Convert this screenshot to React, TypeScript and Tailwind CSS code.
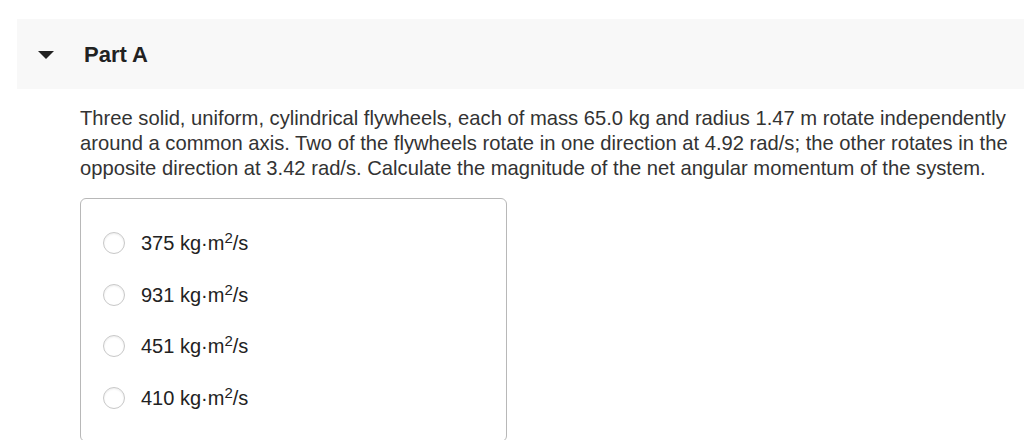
const options = ['375', '931', '451', '410'];

function Radio() {
  return (
    <span className="w-[22px] h-[22px] rounded-full border border-[#c8c8c8] bg-white shadow-[inset_0_1px_2px_rgba(0,0,0,0.08)] shrink-0" />
  );
}

export default function App() {
  return (
    <div className="w-[1024px] h-[440px] overflow-hidden bg-white text-[#333] font-['Liberation_Sans',Arial,sans-serif] pt-[19px]">
      {/* Part header */}
      <div className="ml-[17px] h-[70px] bg-[#f8f8f8] flex items-center">
        <svg className="ml-[21px] mt-[2px]" width="16" height="9" viewBox="0 0 16 9">
          <polygon points="0,0 16,0 8,8" fill="#222" />
        </svg>
        <h2 className="ml-[30px] text-[22px] font-bold text-[#222]">Part A</h2>
      </div>

      <div className="pl-[80px] pr-[8px]">
        <p className="mt-[17px] text-[20.2px] leading-[25px]">
          Three solid, uniform, cylindrical flywheels, each of mass 65.0 kg and radius 1.47 m rotate independently
          around a common axis. Two of the flywheels rotate in one direction at 4.92 rad/s; the other rotates in the
          opposite direction at 3.42 rad/s. Calculate the magnitude of the net angular momentum of the system.
        </p>

        <div className="mt-[17px] w-[427px] h-[244px] border border-[#b8b8b8] rounded-[6px] pt-[33px] pl-[22px]">
          <div className="flex flex-col gap-[29.5px]">
            {options.map((v) => (
              <label key={v} className="flex items-center gap-[16px] h-[22px]">
                <Radio />
                <span className="text-[20px] text-[#222]">
                  {v} kg·m<sup className="text-[15px] relative -top-[7px]">2</sup>/s
                </span>
              </label>
            ))}
          </div>
        </div>
      </div>
    </div>
  );
}
